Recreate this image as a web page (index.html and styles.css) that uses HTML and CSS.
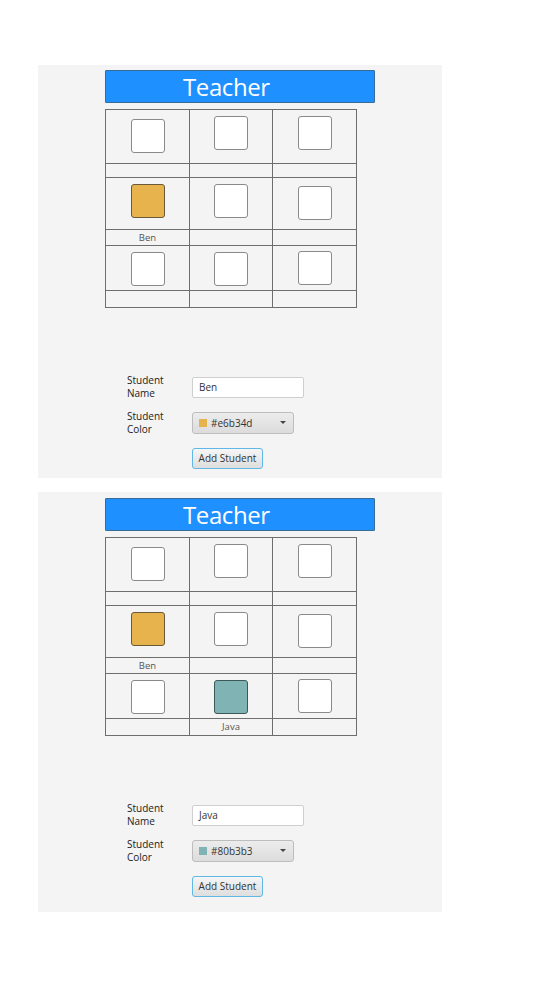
FILE: index.html
```html
<!DOCTYPE html>
<html>
<head>
<meta charset="utf-8">
<link rel="stylesheet" href="styles.css">
</head>
<body>
<div class="page">
  <section class="panel panel-first">
    <div class="header">Teacher</div>
    <div class="seat-grid">
      <div class="cell seat seat-r1c1"><div class="box"></div></div>
      <div class="cell seat seat-r1"><div class="box"></div></div>
      <div class="cell seat seat-r1"><div class="box"></div></div>
      <div class="cell name name-r1"></div>
      <div class="cell name name-r1"></div>
      <div class="cell name name-r1"></div>
      <div class="cell seat seat-r2"><div class="box box-ben"></div></div>
      <div class="cell seat seat-r2"><div class="box"></div></div>
      <div class="cell seat seat-r2 seat-r2c3"><div class="box"></div></div>
      <div class="cell name name-r2">Ben</div>
      <div class="cell name name-r2"></div>
      <div class="cell name name-r2"></div>
      <div class="cell seat seat-r3"><div class="box"></div></div>
      <div class="cell seat seat-r3"><div class="box"></div></div>
      <div class="cell seat seat-r3 seat-r3c3"><div class="box"></div></div>
      <div class="cell name name-r3"></div>
      <div class="cell name name-r3"></div>
      <div class="cell name name-r3"></div>
    </div>
    <div class="form">
      <div class="form-row">
        <div class="label">Student<br>Name</div>
        <div class="textfield">Ben</div>
      </div>
      <div class="form-row">
        <div class="label">Student<br>Color</div>
        <div class="combo"><span class="swatch swatch-ben"></span><span class="combo-text">#e6b34d</span><span class="arrow"></span></div>
      </div>
      <div class="form-row">
        <div class="label"></div>
        <div class="button">Add Student</div>
      </div>
    </div>
  </section>

  <section class="panel panel-second">
    <div class="header">Teacher</div>
    <div class="seat-grid">
      <div class="cell seat seat-r1c1"><div class="box"></div></div>
      <div class="cell seat seat-r1"><div class="box"></div></div>
      <div class="cell seat seat-r1"><div class="box"></div></div>
      <div class="cell name name-r1"></div>
      <div class="cell name name-r1"></div>
      <div class="cell name name-r1"></div>
      <div class="cell seat seat-r2"><div class="box box-ben"></div></div>
      <div class="cell seat seat-r2"><div class="box"></div></div>
      <div class="cell seat seat-r2 seat-r2c3"><div class="box"></div></div>
      <div class="cell name name-r2">Ben</div>
      <div class="cell name name-r2"></div>
      <div class="cell name name-r2"></div>
      <div class="cell seat seat-r3"><div class="box"></div></div>
      <div class="cell seat seat-r3"><div class="box box-java"></div></div>
      <div class="cell seat seat-r3 seat-r3c3"><div class="box"></div></div>
      <div class="cell name name-r3"></div>
      <div class="cell name name-r3">Java</div>
      <div class="cell name name-r3"></div>
    </div>
    <div class="form">
      <div class="form-row">
        <div class="label">Student<br>Name</div>
        <div class="textfield">Java</div>
      </div>
      <div class="form-row">
        <div class="label">Student<br>Color</div>
        <div class="combo"><span class="swatch swatch-java"></span><span class="combo-text">#80b3b3</span><span class="arrow"></span></div>
      </div>
      <div class="form-row">
        <div class="label"></div>
        <div class="button">Add Student</div>
      </div>
    </div>
  </section>
</div>
</body>
</html>
```

FILE: styles.css
```css
html, body {
  margin: 0;
  padding: 0;
  background: #ffffff;
}

body {
  font-family: "Open Sans", "Noto Sans", sans-serif;
  color: #333333;
}

.page {
  padding: 65px 0 0 38px;
  display: flex;
  flex-direction: column;
  gap: 14px;
}

.panel {
  width: 404px;
  background: #f4f4f4;
  box-sizing: border-box;
  padding: 5px 0 7px 67px;
  display: flex;
  flex-direction: column;
}

.panel-second {
  padding-top: 6px;
  padding-bottom: 13px;
}

.header {
  width: 270px;
  height: 33px;
  box-sizing: border-box;
  background: #1e90ff;
  border: 1px solid #3a6a96;
  border-radius: 1px;
  color: #ffffff;
  font-size: 24px;
  line-height: 31px;
  padding-left: 77px;
  letter-spacing: -0.4px;
}

.seat-grid {
  margin-top: 6px;
  width: 252px;
  display: grid;
  grid-template-columns: 83px 82px 83px;
  grid-template-rows: 53px 13px 51px 15px 44px 16px;
  gap: 1px;
  padding: 1px;
  box-sizing: border-box;
  background: #6e6e6e;
}

.cell {
  background: #f4f4f4;
}

.seat {
  display: flex;
  justify-content: center;
  align-items: flex-start;
  padding-top: 6px;
  box-sizing: border-box;
}

.seat-r1c1 {
  padding-top: 9px;
}

.seat-r2c3 {
  padding-top: 8px;
}

.seat-r3c3 {
  padding-top: 5px;
}

.box {
  width: 34px;
  height: 34px;
  box-sizing: border-box;
  background: #ffffff;
  border: 1.5px solid #8a8a8a;
  border-radius: 3px;
}

.box-ben {
  background: #e6b34d;
  border-color: #6a5a3a;
}

.box-java {
  background: #80b3b3;
  border-color: #3e5858;
}

.name {
  font-size: 9.5px;
  color: #555555;
  text-align: center;
  line-height: 15px;
}

.form {
  margin-top: 66px;
  display: flex;
  flex-direction: column;
  gap: 9.5px;
  padding-left: 22px;
}

.form-row {
  display: flex;
  align-items: center;
}

.label {
  width: 65px;
  height: 26px;
  font-size: 10px;
  line-height: 13px;
  color: #222222;
}

.textfield {
  width: 112px;
  height: 21px;
  box-sizing: border-box;
  background: #ffffff;
  border: 1px solid #cfcfcf;
  border-radius: 2px;
  font-size: 10px;
  line-height: 19px;
  padding-left: 6px;
  color: #333333;
}

.combo {
  width: 102px;
  height: 22px;
  box-sizing: border-box;
  background: linear-gradient(#ececec, #dcdcdc);
  border: 1px solid #bdbdbd;
  border-radius: 3px;
  display: flex;
  align-items: center;
  padding-left: 6px;
  font-size: 10px;
  color: #333333;
}

.swatch {
  width: 8px;
  height: 8px;
  margin-right: 4px;
}

.swatch-ben {
  background: #e6b34d;
}

.swatch-java {
  background: #80b3b3;
}

.combo-text {
  flex: 1;
}

.arrow {
  width: 0;
  height: 0;
  border-left: 3.5px solid transparent;
  border-right: 3.5px solid transparent;
  border-top: 3.5px solid #444444;
  margin-right: 7px;
}

.button {
  width: 71px;
  height: 21px;
  box-sizing: border-box;
  background: linear-gradient(#f6f6f6, #dedede);
  border: 1.5px solid #5fb8e6;
  border-radius: 3px;
  font-size: 10px;
  line-height: 18px;
  text-align: center;
  color: #333333;
}
```
